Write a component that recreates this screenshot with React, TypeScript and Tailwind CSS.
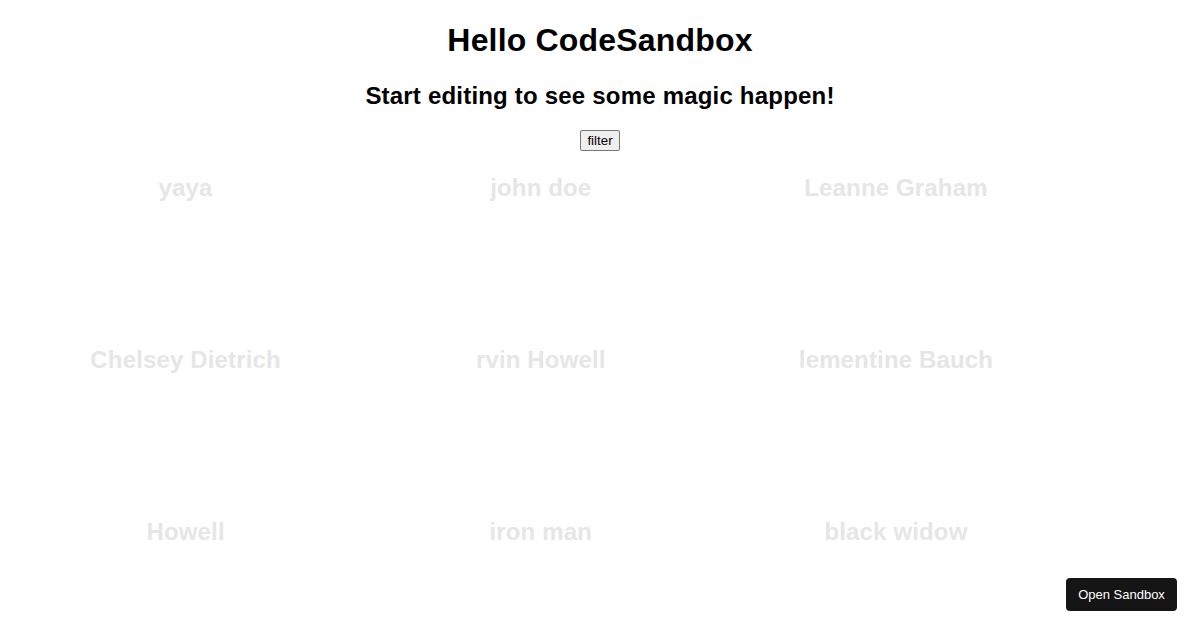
const names = [
  'yaya',
  'john doe',
  'Leanne Graham',
  'Chelsey Dietrich',
  'rvin Howell',
  'lementine Bauch',
  'Howell',
  'iron man',
  'black widow',
];

export default function App() {
  return (
    <div className="relative h-[630px] overflow-hidden bg-white px-2 text-center text-black font-['Liberation_Sans',Arial,sans-serif]">
      <h1 className="pt-[22px] text-[32px] font-bold leading-[37px] tracking-[0.18px]">Hello CodeSandbox</h1>
      <h2 className="mt-[23px] text-[24px] font-bold leading-[28px] tracking-[0.2px]">
        Start editing to see some magic happen!
      </h2>
      <div className="mt-[20px] flex justify-center">
        <button className="h-[21px] rounded-[2px] border border-[#767676] bg-[#efefef] px-[6px] text-[13.33px] leading-[17px]">
          filter
        </button>
      </div>
      <div className="flex flex-wrap">
        {names.map((name) => (
          <div key={name} className="h-[172px] w-[30%] pt-[23px]">
            <h2 className="text-[24px] font-bold leading-[28px] tracking-[0.15px] text-[#e6e6e6]">{name}</h2>
          </div>
        ))}
      </div>
      <button className="fixed bottom-[19px] right-[23px] h-[33px] w-[111px] rounded-[4px] bg-[#151515] text-[13px] text-white">
        Open Sandbox
      </button>
    </div>
  );
}
